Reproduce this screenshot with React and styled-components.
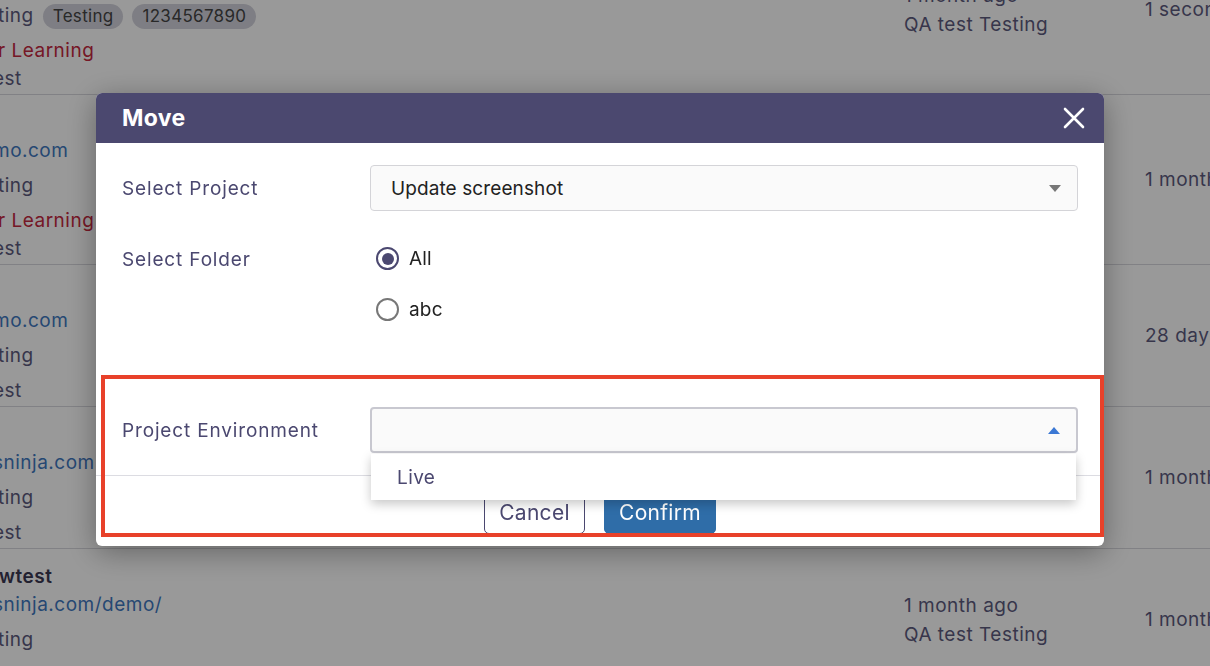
import React from 'react';
import styled, { createGlobalStyle } from 'styled-components';

const GlobalStyle = createGlobalStyle`
  html, body {
    margin: 0;
    padding: 0;
    background: #fff;
    font-family: Inter, "Noto Sans", "Liberation Sans", sans-serif;
    overflow: hidden;
  }
  * { box-sizing: border-box; }
`;

const Page = styled.div`
  width: 1210px;
  height: 666px;
  overflow: hidden;
  position: relative;
`;

const List = styled.div`
  margin-top: -75px;
`;

const Row = styled.div`
  display: flex;
  height: ${p => p.h}px;
  border-bottom: 1px solid #d8d8de;
`;

const LeftCol = styled.div`
  flex: 0 0 904px;
  padding-top: 14px;
  color: #5c5a7e;
  font-size: 19px;
  letter-spacing: 0.5px;
  overflow: hidden;
`;

const Line = styled.div`
  height: ${p => p.h || 28}px;
  line-height: ${p => p.h || 28}px;
  display: flex;
  align-items: center;
  gap: 8px;
  margin-left: ${p => p.shift ?? -4}px;
  color: ${p => p.color || 'inherit'};
  font-weight: ${p => (p.bold ? 600 : 400)};
  white-space: nowrap;
`;

const Chip = styled.span`
  display: inline-block;
  height: 25px;
  line-height: 25px;
  padding: 0 10px;
  border-radius: 13px;
  background: #d3d3dc;
  color: #454545;
  font-size: 17px;
  letter-spacing: 0.3px;
  margin-left: 1px;
`;

const MidCol = styled.div`
  flex: 0 0 241px;
  display: flex;
  flex-direction: column;
  justify-content: center;
  color: #5c5a7e;
  font-size: 19px;
  letter-spacing: 0.5px;
  line-height: 29px;
`;

const RightCol = styled.div`
  flex: 1;
  min-width: 0;
  display: flex;
  align-items: center;
  color: #5c5a7e;
  font-size: 19px;
  letter-spacing: 0.5px;
  white-space: nowrap;
`;

const Overlay = styled.div`
  position: fixed;
  inset: 0;
  background: rgba(0, 0, 0, 0.4);
  padding: 93px 0 0 96px;
`;

const Modal = styled.div`
  position: relative;
  width: 1008px;
  background: #fff;
  border-radius: 6px;
  box-shadow: 0 6px 30px rgba(0, 0, 0, 0.35);
`;

const Header = styled.div`
  height: 50px;
  background: #4b486f;
  border-radius: 6px 6px 0 0;
  display: flex;
  align-items: center;
  justify-content: space-between;
  padding: 0 18px 0 26px;
  color: #fff;
  font-size: 23px;
  font-weight: 700;
  letter-spacing: 0.3px;
`;

const CloseButton = styled.button`
  border: 0;
  background: none;
  padding: 0;
  width: 24px;
  height: 24px;
  display: flex;
  cursor: pointer;
`;

const Body = styled.div`
  padding: 22px 26px 22px 26px;
  border-bottom: 1px solid #dcdce2;
`;

const FormRow = styled.div`
  display: grid;
  grid-template-columns: 248px 1fr;
  align-items: ${p => (p.top ? 'start' : 'center')};
  margin-bottom: ${p => p.mb || 0}px;
`;

const Label = styled.div`
  color: #4b4870;
  font-size: 19px;
  letter-spacing: 0.85px;
`;

const SelectBox = styled.div`
  position: relative;
  height: 46px;
  background: #fafafa;
  border: 1px solid ${p => (p.open ? '#c8c8d0' : '#d4d4d8')};
  border-width: ${p => (p.open ? '2px' : '1px')};
  border-radius: 4px;
  display: flex;
  align-items: center;
  justify-content: space-between;
  padding: 0 16px 0 20px;
  color: #222;
  font-size: 19px;
  letter-spacing: 0.1px;
`;

const Caret = styled.span`
  width: 0;
  height: 0;
  border-left: 6px solid transparent;
  border-right: 6px solid transparent;
  ${p => (p.up
    ? 'border-bottom: 7px solid #3b78d4;'
    : 'border-top: 7px solid #777;')}
`;

const Menu = styled.div`
  position: absolute;
  left: -1px;
  right: 0;
  top: 45px;
  height: 46px;
  background: #fff;
  box-shadow: 0 4px 10px rgba(0, 0, 0, 0.22);
  display: flex;
  align-items: center;
  padding-left: 26px;
  color: #4b4870;
  font-size: 19px;
  letter-spacing: 0.4px;
  z-index: 2;
`;

const RadioGroup = styled.div`
  display: flex;
  flex-direction: column;
  gap: 28px;
  padding-left: 6px;
  margin-top: -1px;
`;

const RadioItem = styled.label`
  display: flex;
  align-items: center;
  gap: 10px;
  color: #222;
  font-size: 19px;
  letter-spacing: 0.2px;
`;

const RadioDot = styled.span`
  width: 23px;
  height: 23px;
  border-radius: 50%;
  border: 2.5px solid ${p => (p.checked ? '#4b4870' : '#777')};
  display: flex;
  align-items: center;
  justify-content: center;
  &::after {
    content: '';
    width: 12px;
    height: 12px;
    border-radius: 50%;
    background: ${p => (p.checked ? '#4b4870' : 'transparent')};
  }
`;

const Footer = styled.div`
  height: 70px;
  display: flex;
  justify-content: center;
  align-items: flex-start;
  gap: 19px;
  padding-top: 15px;
`;

const Button = styled.button`
  height: 43px;
  padding: 0 14px;
  border-radius: 5px;
  font-family: inherit;
  font-size: 21px;
  letter-spacing: 0.3px;
  border: 1px solid ${p => (p.primary ? '#2f6da8' : '#4b4870')};
  background: ${p => (p.primary ? '#2f6da8' : '#fff')};
  color: ${p => (p.primary ? '#fff' : '#4b4870')};
  min-width: ${p => (p.primary ? 112 : 101)}px;
`;

const Highlight = styled.div`
  position: absolute;
  left: 5px;
  top: 282px;
  width: 1003px;
  height: 162px;
  border: 4px solid #e8412a;
  pointer-events: none;
  z-index: 3;
`;

const rows = [
  { h: 170, url: 'mo.com', tags: true, learning: true, mid: ['1 month ago', 'QA test Testing'], right: '1 second' },
  { h: 170, url: 'mo.com', learning: true, right: '1 month' },
  { h: 142, url: 'mo.com', right: '28 days' },
  { h: 142, url: 'sninja.com', right: '1 month' },
  { h: 142, title: 'wtest', url: 'sninja.com/demo/', mid: ['1 month ago', 'QA test Testing'], right: '1 month' },
];

const App = () => (
  <Page>
    <GlobalStyle />
    <List>
      {rows.map((r, i) => (
        <Row key={i} h={r.h}>
          <LeftCol>
            <Line bold color="#3a3852" shift={-1}>{r.title || ''}</Line>
            <Line color="#3f78c0" shift={-7}>{r.url}</Line>
            <Line h={42} shift={-2}>
              ting
              {r.tags && (
                <>
                  <Chip>Testing</Chip>
                  <Chip>1234567890</Chip>
                </>
              )}
            </Line>
            {r.learning && <Line color="#c4283f" shift={-2}>r Learning</Line>}
            <Line shift={-7}>est</Line>
          </LeftCol>
          <MidCol>
            {r.mid && r.mid.map((t, j) => <div key={j}>{t}</div>)}
          </MidCol>
          <RightCol>{r.right}</RightCol>
        </Row>
      ))}
    </List>

    <Overlay>
      <Modal>
        <Header>
          <span>Move</span>
          <CloseButton aria-label="Close">
            <svg width="24" height="24" viewBox="0 0 24 24">
              <path d="M3 3 L21 21 M21 3 L3 21" stroke="#fff" strokeWidth="2.6" strokeLinecap="round" />
            </svg>
          </CloseButton>
        </Header>
        <Body>
          <FormRow mb={37}>
            <Label>Select Project</Label>
            <SelectBox>
              <span>Update screenshot</span>
              <Caret />
            </SelectBox>
          </FormRow>
          <FormRow top mb={86}>
            <Label>Select Folder</Label>
            <RadioGroup>
              <RadioItem><RadioDot checked />All</RadioItem>
              <RadioItem><RadioDot />abc</RadioItem>
            </RadioGroup>
          </FormRow>
          <FormRow>
            <Label>Project Environment</Label>
            <SelectBox open>
              <span />
              <Caret up />
              <Menu>Live</Menu>
            </SelectBox>
          </FormRow>
        </Body>
        <Footer>
          <Button>Cancel</Button>
          <Button primary>Confirm</Button>
        </Footer>
        <Highlight />
      </Modal>
    </Overlay>
  </Page>
);

export default App;
